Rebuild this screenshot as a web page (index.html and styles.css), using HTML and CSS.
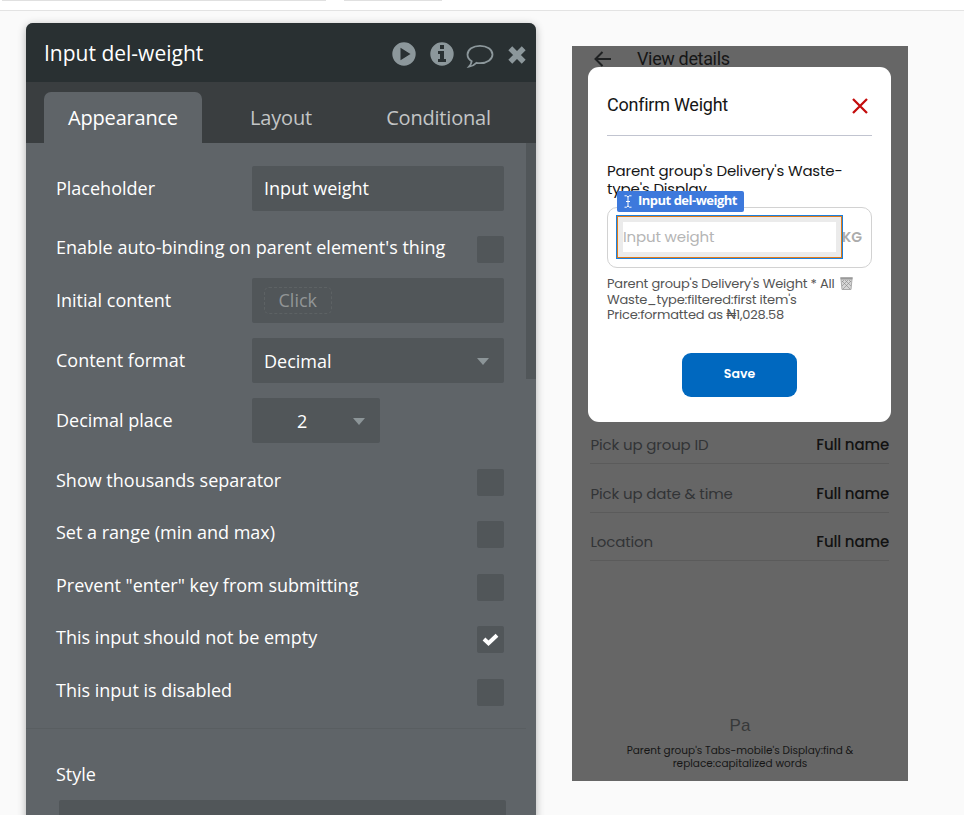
FILE: index.html
```html
<!DOCTYPE html>
<html lang="en">
<head>
  <meta charset="utf-8">
  <title>Input del-weight</title>
  <meta name="viewport" content="width=device-width, initial-scale=1">
  <link rel="stylesheet" href="styles.css">
</head>
<body>
  <header class="topbar">
    <div class="topbar-field"></div>
    <div class="topbar-button"></div>
  </header>
  <main class="workspace">
    <section class="panel">
      <div class="panel-header">
        <h1>Input del-weight</h1>
        <div class="panel-icons">
          <svg class="icon-round" viewBox="0 0 24 24"><path fill-rule="evenodd" d="M12 .3a11.7 11.7 0 1 0 0 23.4A11.7 11.7 0 0 0 12 .3zM8.500 5.800v12.400l10-6.200z"/></svg>
          <svg class="icon-round" viewBox="0 0 24 24"><path fill-rule="evenodd" d="M12 .3a11.7 11.7 0 1 0 0 23.4A11.7 11.7 0 0 0 12 .3zM10 3h4v4h-4zM8 9h6v8h2v3H8v-3h2v-5H8z"/></svg>
          <svg class="icon-comment" viewBox="0 0 28 25"><path d="M14 1.800c7 0 12.500 3.800 12.500 8.700S21 19.200 14 19.200c-1.300 0-2.500-.1-3.600-.4-1.900 2-4.300 3.500-7.400 3.900 1.600-1.700 2.500-3.500 2.700-5.500C3.100 15.600 1.500 13.200 1.500 10.500 1.500 5.600 7 1.800 14 1.800z"/></svg>
          <svg class="icon-close" viewBox="0 0 20 20"><path d="M3.300 3.300l13.400 13.400M16.700 3.300L3.300 16.700"/></svg>
        </div>
      </div>
      <nav class="tabs">
        <div class="tab tab-active">Appearance</div>
        <div class="tab tab-layout">Layout</div>
        <div class="tab tab-conditional">Conditional</div>
      </nav>
      <div class="panel-body">
        <div class="properties">
          <div class="row"><label>Placeholder</label><div class="field">Input weight</div></div>
          <div class="row row-check row-binding"><label>Enable auto-binding on parent element's thing</label><span class="check"></span></div>
          <div class="row"><label>Initial content</label><div class="field"><span class="expression">Click</span></div></div>
          <div class="row"><label>Content format</label><div class="field field-select">Decimal<span class="caret"></span></div></div>
          <div class="row"><label>Decimal place</label><div class="field field-select field-small"><span>2</span><span class="caret"></span></div></div>
          <div class="row row-check row-separator"><label>Show thousands separator</label><span class="check"></span></div>
          <div class="row row-check"><label>Set a range (min and max)</label><span class="check"></span></div>
          <div class="row row-check"><label>Prevent "enter" key from submitting</label><span class="check"></span></div>
          <div class="row row-check"><label>This input should not be empty</label><span class="check"><svg viewBox="0 0 17 13"><path d="M2 6l4.500 4.200L15 2.200"/></svg></span></div>
          <div class="row row-check"><label>This input is disabled</label><span class="check"></span></div>
          <div class="style-section">
            <label>Style</label>
            <div class="style-field"></div>
          </div>
        </div>
        <div class="scrollbar"></div>
      </div>
    </section>

    <section class="phone">
      <div class="page-title">
        <svg viewBox="0 0 18 16"><path d="M17 8H1.500M8.500 1L1.500 8l7 7"/></svg>
        <span>View details</span>
      </div>
      <div class="details">
        <div class="detail"><span>Pick up group ID</span><b>Full name</b></div>
        <div class="detail"><span>Pick up date &amp; time</span><b>Full name</b></div>
        <div class="detail"><span>Location</span><b>Full name</b></div>
      </div>
      <footer class="tabbar">
        <div class="tab-icon">Pa</div>
        <div class="tab-text">Parent group's Tabs-mobile's Display:find &amp;<br>replace:capitalized words</div>
      </footer>

      <div class="popup">
        <div class="popup-header">
          <h2>Confirm Weight</h2>
          <svg viewBox="0 0 16 16"><path d="M1 1l14 14M15 1L1 15"/></svg>
        </div>
        <p class="waste">Parent group's Delivery's Waste-<br>type's Display</p>
        <div class="weight-box">
          <div class="weight-input"><span>Input weight</span></div>
          <span class="unit">KG</span>
          <div class="element-tag">
            <svg viewBox="0 0 8 13"><path d="M.5.800h2L4 2l1.500-1.200h2M4 2v9M.5 12.200h2L4 11l1.500 1.200h2M2 6.500h4"/></svg>
            <span>Input del-weight</span>
          </div>
        </div>
        <p class="price">
          Parent group's Delivery's Weight * All
          <svg viewBox="0 0 13 13"><path class="bin" d="M1 2h11l-1 10.500H2z"/><path class="mesh" d="M2 4l8 8M5 3l6 6M9 3l2 2M11 4l-8 8M8 3L2 9M4 3L2 5"/><path class="rim" d="M.3 1.200h12.400"/></svg><br>
          Waste_type:filtered:first item's<br>
          Price:formatted as ₦1,028.58
        </p>
        <button class="save">Save</button>
      </div>
    </section>
  </main>
</body>
</html>
```
FILE: styles.css
```css
*, *::before, *::after { box-sizing: border-box; }
html, body { margin: 0; height: 100%; overflow: hidden; }
body {
  background: #fafafa;
  font-family: "Open Sans", sans-serif;
}
h1, h2, p { margin: 0; font-weight: 400; }

.topbar {
  display: flex; gap: 18px;
  height: 11px; padding-left: 2px;
  background: #fff; border-bottom: 1px solid #e3e3e3;
}
.topbar-field, .topbar-button { height: 1px; background: #e0e0e0; }
.topbar-field { width: 324px; }
.topbar-button { width: 98px; }

.workspace {
  display: flex; align-items: flex-start; gap: 36px;
  height: 804px; padding: 12px 0 0 26px;
}

/* Property editor */
.panel {
  width: 510px; height: 820px; flex: none;
  color: #fff; background: #5f6468;
  border-radius: 7px 7px 0 0;
  box-shadow: 0 2px 8px rgba(0, 0, 0, .3);
  overflow: hidden;
}
.panel-header {
  display: flex; justify-content: space-between; align-items: center;
  height: 59px; padding: 3px 9px 0 18px;
  background: #293032;
}
.panel-header h1 { margin-top: -2px; font-size: 21px; line-height: 28px; }
.panel-icons { display: flex; align-items: center; fill: #8c979b; }
.panel-icons svg { flex: none; }
.icon-round { width: 24px; height: 24px; margin-right: 13.500px; }
.icon-comment { width: 28px; height: 25px; margin: 4px 13px 0 -1px; fill: none; stroke: #8c979b; stroke-width: 1.800; }
.icon-close { width: 20px; height: 20px; margin-top: 2px; stroke: #8c979b; stroke-width: 5.500; }
.tabs {
  display: flex; align-items: flex-end;
  height: 61px; padding-left: 18px;
  background: #3a3e40; color: #c3c5c6;
  font-size: 20px; letter-spacing: -.2px;
}
.tab { height: 51px; line-height: 51px; text-align: center; }
.tab-active { width: 158px; color: #fff; background: #5f6468; border-radius: 7px 7px 0 0; }
.tab-layout { width: 158px; }
.tab-conditional { width: 157px; }
.panel-body { display: flex; height: 700px; }
.properties { width: 500px; padding-top: 23px; font-size: 18px; }
.scrollbar { width: 10px; height: 236px; background: #515659; }
.row {
  display: flex; justify-content: space-between; align-items: center;
  height: 45px; margin: 0 22px 15px 30px;
}
.row label { padding-bottom: 2px; line-height: 26px; white-space: nowrap; }
.field {
  display: flex; align-items: center;
  width: 252px; height: 45px; padding: 0 12px 2px;
  background: #515659; border-radius: 2px;
}
.expression {
  height: 27px; margin-top: 1px; padding: 0 13.500px; line-height: 25px;
  color: #919596; border: 1px dashed #5d6264; border-radius: 5px;
}
.field-select { justify-content: space-between; padding: 1px 15px 0 12px; }
.field-small { width: 128px; margin-right: 124px; padding-left: 45px; }
.caret { border: 6.500px solid transparent; border-top: 7px solid #8c9598; border-bottom: 0; }
.row-check { height: 37.500px; padding-top: 10px; align-items: flex-start; }
.row-binding { height: 37px; }
.row-separator { margin-top: 15.500px; }
.row-check label { padding: 0; line-height: 23.600px; }
.check {
  display: flex; align-items: center; justify-content: center;
  width: 27px; height: 27px;
  background: #515659; border-radius: 2px;
}
.check svg { width: 17px; height: 13px; margin-bottom: 1px; fill: none; stroke: #fff; stroke-width: 4; }
.style-section { margin-top: 22px; padding: 32px 20px 0 30px; border-top: 1px solid #595e61; }
.style-section label { display: block; line-height: 26px; }
.style-field { height: 60px; margin: 13px 0 0 3px; background: #515659; border-radius: 2px 2px 0 0; }

/* Phone preview */
.phone {
  position: relative;
  width: 336px; height: 735px; margin-top: 23px;
  display: flex; flex-direction: column;
  color: #161616; background: #666;
  font-family: Poppins, Inter, sans-serif;
}
.page-title {
  display: flex; align-items: center; gap: 25px;
  height: 26px; padding-left: 22px;
  font: 18px/26px Roboto, sans-serif; letter-spacing: -.35px;
}
.page-title svg { width: 18px; height: 16px; fill: none; stroke: #1f2122; stroke-width: 2; }
.details { margin: 349px 19px 0 18px; }
.detail {
  display: flex; justify-content: space-between; align-items: center;
  height: 48.500px; padding: 11px 0 0 .500px;
  border-bottom: 1px solid #5b5b5b;
  font-size: 15px; letter-spacing: -.15px; color: #323436;
}
.detail:first-child { height: 43px; padding-top: 5px; }
.detail b { font-weight: 500; color: #121212; }
.tabbar { margin-top: auto; padding-bottom: 11px; text-align: center; }
.tab-icon { font: 17px/24px "Liberation Sans", sans-serif; color: #37393a; }
.tab-text { margin-top: 6px; font-size: 10.500px; line-height: 13px; white-space: nowrap; }

.popup {
  position: absolute; left: 16px; top: 21px;
  width: 303px; height: 355px; padding: 0 19px;
  background: #fff; border-radius: 11px;
  white-space: nowrap;
}
.popup-header {
  display: flex; justify-content: space-between; align-items: center;
  height: 69px; padding: 8px 4.500px 0 0;
  border-bottom: 1px solid #c1c4d0;
}
.popup-header h2 { font: 18px/26px Roboto, sans-serif; letter-spacing: -.25px; }
.popup-header svg { width: 16px; height: 16px; margin-top: 1px; stroke: #c40d0d; stroke-width: 2.300; }
.waste { margin-top: 26px; font-size: 15px; line-height: 18px; letter-spacing: -.17px; }
.weight-box {
  position: relative;
  display: flex; align-items: center;
  width: 265px; height: 61px; margin-top: 9px; padding: 0 0 1px 8px;
  border: 1px solid #d2d2d2; border-radius: 10px;
}
.weight-input {
  width: 227px; height: 44px; padding: 1px;
  background: #e07b1b; border: 1px solid #1c80dc;
  color: #b5b5b5; font-size: 15px; letter-spacing: -.15px;
}
.weight-input span {
  display: block; height: 40px; line-height: 30px;
  background: #fff; border: 5px solid #ebebeb;
}
.unit { margin-left: -1px; font-size: 14px; font-weight: 600; color: #acacac; }
.element-tag {
  position: absolute; left: 9px; top: -17px;
  display: flex; align-items: center; gap: 6px;
  width: 127px; height: 21px; padding-left: 7px;
  color: #fff; background: #3d79dc; border-radius: 2px;
  font: 700 13px/18px "Open Sans", sans-serif; letter-spacing: -.5px;
}
.element-tag span { margin-top: -3px; }
.element-tag svg { width: 8px; height: 13px; fill: none; stroke: #fff; }
.price { margin-top: 8px; font-size: 13px; line-height: 15.500px; letter-spacing: -.19px; color: #545454; }
.price svg { width: 13px; height: 13px; margin-left: 2px; vertical-align: -2px; fill: none; }
.bin { fill: #d6d6d6; stroke: #aaa; }
.mesh { stroke: #888; stroke-width: .6; }
.rim { stroke: #999; stroke-width: 2; }
.save {
  display: block; width: 115px; height: 44px; margin: 30px 0 0 75px; padding: 0 0 2px;
  color: #fff; background: #0068bf; border: 0; border-radius: 9px;
  font: 600 12.500px Poppins, Inter, sans-serif;
}
```
